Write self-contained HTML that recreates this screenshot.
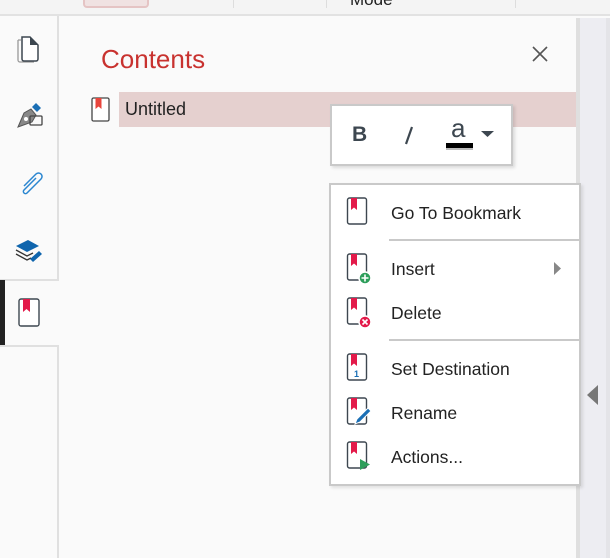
<!DOCTYPE html>
<html><head><meta charset="utf-8"><style>
*{margin:0;padding:0;box-sizing:border-box}
body{width:610px;height:558px;overflow:hidden;background:#fafafa;font-family:"Liberation Sans",sans-serif;position:relative}
.a{position:absolute}
.mi{position:absolute;left:391px;font-size:17.5px;color:#222;line-height:20px}
</style></head><body>
<div class="a" style="left:0;top:0;width:610px;height:16px;background:#f4f4f4;border-bottom:2px solid #e2e2e2"></div>
<div class="a" style="left:83px;top:-6px;width:66px;height:14px;border:2px solid #e5c4c4;border-radius:4px;background:#f0e2e2"></div>
<div class="a" style="left:233px;top:0;width:1px;height:8px;background:#ddd"></div>
<div class="a" style="left:326px;top:0;width:1px;height:8px;background:#ddd"></div>
<div class="a" style="left:515px;top:0;width:1px;height:8px;background:#ddd"></div>
<div class="a" style="left:350px;top:-10px;font-size:17px;color:#222">Mode</div>
<div class="a" style="left:57px;top:16px;width:2px;height:264px;background:#e0e0e0"></div>
<div class="a" style="left:0;top:279px;width:59px;height:2px;background:#e0e0e0"></div>
<div class="a" style="left:0;top:280px;width:5px;height:65px;background:#222"></div>
<div class="a" style="left:0;top:345px;width:59px;height:2px;background:#e0e0e0"></div>
<div class="a" style="left:57px;top:345px;width:2px;height:213px;background:#e0e0e0"></div>
<svg class="a" style="left:0;top:16px" width="58" height="330">
 <path d="M18 24 h3 M18 24 v20 a2 2 0 0 0 2 2 h14" stroke="#999" stroke-width="1.3" fill="none"/>
 <path d="M22 21 h8 l8 8 v14 a2 2 0 0 1 -2 2 h-12 a2 2 0 0 1 -2 -2 z" fill="#fff" stroke="#3d4750" stroke-width="1.5"/>
 <path d="M30 21 v8 h8 z" fill="#3d4750"/>
 <path d="M18 111 l6 -14 l7 -4 l5 6 l-4 7 z" fill="#888" stroke="#555" stroke-width="1"/>
 <circle cx="26" cy="103" r="2" fill="#fff"/>
 <path d="M32 91 l4 -4 l5 5 l-4 4 z" fill="#1a6fb5"/>
 <rect x="30" y="100" width="12" height="9" fill="none" stroke="#444" stroke-width="1.3" rx="1"/>
 <path d="M24 170 l12 -12 a3.5 3.5 0 0 1 5 5 l-14 14 a2 2 0 0 1 -3 -3 l12 -12" fill="none" stroke="#2a86d0" stroke-width="1.5"/>
 <path d="M16 230 l12 -6 l11 6 l-12 6 z" fill="#0f65ad"/>
 <path d="M16 234 l11 6 l6 -3 M16 238 l11 6 l4 -2" stroke="#333" stroke-width="1.3" fill="none"/>
 <path d="M30 243 l9 -8 l3 3 l-9 8 z" fill="#0f65ad"/>
 <rect x="19" y="283" width="20" height="27" rx="2" fill="#fff" stroke="#3d4750" stroke-width="1.4"/>
 <path d="M23 283 h7 v13 l-3.5 -3 l-3.5 3 z" fill="#e31a4a"/>
</svg>
<div class="a" style="left:101px;top:44px;font-size:26px;color:#c8322f;font-weight:300;line-height:30px">Contents</div>
<svg class="a" style="left:532px;top:46px" width="16" height="16"><path d="M1 1 L15 15 M15 1 L1 15" stroke="#555" stroke-width="1.6"/></svg>
<svg class="a" style="left:91px;top:97px" width="20" height="26"><rect x="1" y="1" width="17" height="23" rx="1.5" fill="#fff" stroke="#444" stroke-width="1.3"/><path d="M4.5 1 h6 v11 l-3 -2.5 l-3 2.5 z" fill="#e8453c"/></svg>
<div class="a" style="left:119px;top:92px;width:457px;height:35px;background:#e5d0cf"></div>
<div class="a" style="left:125px;top:99px;font-size:18px;color:#222">Untitled</div>
<div class="a" style="left:576px;top:18px;width:4px;height:540px;background:#dfdfdf"></div>
<div class="a" style="left:580px;top:18px;width:30px;height:540px;background:#ededf2"></div>
<div class="a" style="left:606px;top:18px;width:4px;height:540px;background:#e4e4e8"></div>
<svg class="a" style="left:586px;top:384px" width="14" height="22"><path d="M12 1 L1 11 L12 21 z" fill="#777"/></svg>
<div class="a" style="left:330px;top:104px;width:183px;height:62px;background:#fff;border:2px solid #c9c9c9;box-shadow:2px 2px 3px rgba(0,0,0,.12)"></div>
<div class="a" style="left:352px;top:123px;font-size:21px;font-weight:bold;color:#3d4750">B</div>
<svg class="a" style="left:403px;top:126px" width="12" height="20"><path d="M9 1 L3 18" stroke="#3d4750" stroke-width="2.2"/></svg>
<div class="a" style="left:451px;top:115px;font-size:26px;color:#3d4750;line-height:26px">a</div>
<div class="a" style="left:446px;top:143px;width:27px;height:7px;background:#000;border-bottom:2px solid #bbb"></div>
<svg class="a" style="left:481px;top:131px" width="14" height="7"><path d="M0 0 h13 l-6.5 6 z" fill="#3d4750"/></svg>
<div class="a" style="left:329px;top:183px;width:252px;height:303px;background:#fff;border:2px solid #c9c9c9;box-shadow:2px 2px 3px rgba(0,0,0,.1)"></div>
<div class="a" style="left:389px;top:239px;width:191px;height:2px;background:#c9c9c9"></div>
<div class="a" style="left:389px;top:339px;width:191px;height:2px;background:#c9c9c9"></div>
<svg class="a" style="left:345px;top:196px" width="30" height="284">
 <g><rect x="2.5" y="2" width="19" height="26" rx="2" fill="#fff" stroke="#3d4750" stroke-width="1.4"/><path d="M6 2 h6 v12 l-3 -2.5 l-3 2.5 z" fill="#e31a4a"/></g>
 <g transform="translate(0,56)"><rect x="2.5" y="2" width="19" height="26" rx="2" fill="#fff" stroke="#3d4750" stroke-width="1.4"/><path d="M6 2 h6 v12 l-3 -2.5 l-3 2.5 z" fill="#e31a4a"/><circle cx="20" cy="26" r="6" fill="#2e9e5b" stroke="#fff" stroke-width="1.5"/><path d="M16.5 26 h7 M20 22.5 v7" stroke="#fff" stroke-width="1.6"/></g>
 <g transform="translate(0,100)"><rect x="2.5" y="2" width="19" height="26" rx="2" fill="#fff" stroke="#3d4750" stroke-width="1.4"/><path d="M6 2 h6 v12 l-3 -2.5 l-3 2.5 z" fill="#e31a4a"/><circle cx="20" cy="26" r="6" fill="#e31a4a" stroke="#fff" stroke-width="1.5"/><path d="M17.5 23.5 l5 5 M22.5 23.5 l-5 5" stroke="#fff" stroke-width="1.6"/></g>
 <g transform="translate(0,156)"><rect x="2.5" y="2" width="19" height="26" rx="2" fill="#fff" stroke="#3d4750" stroke-width="1.4"/><path d="M6 2 h6 v12 l-3 -2.5 l-3 2.5 z" fill="#e31a4a"/><text x="9" y="25" font-size="9" font-weight="bold" fill="#1a6fb5" font-family="Liberation Sans">1</text></g>
 <g transform="translate(0,200)"><rect x="2.5" y="2" width="19" height="26" rx="2" fill="#fff" stroke="#3d4750" stroke-width="1.4"/><path d="M6 2 h6 v12 l-3 -2.5 l-3 2.5 z" fill="#e31a4a"/><path d="M10 28 l2 -5 l11 -11 l3 3 l-11 11 z" fill="#1a6fb5" stroke="#fff" stroke-width="1"/></g>
 <g transform="translate(0,244)"><rect x="2.5" y="2" width="19" height="26" rx="2" fill="#fff" stroke="#3d4750" stroke-width="1.4"/><path d="M6 2 h6 v12 l-3 -2.5 l-3 2.5 z" fill="#e31a4a"/><path d="M15 19 L25 24.5 L15 30 z" fill="#2e9e5b"/></g>
</svg>
<div class="mi" style="top:203px">Go To Bookmark</div>
<div class="mi" style="top:259px">Insert</div>
<div class="mi" style="top:303px">Delete</div>
<div class="mi" style="top:359px">Set Destination</div>
<div class="mi" style="top:403px">Rename</div>
<div class="mi" style="top:447px">Actions...</div>
<svg class="a" style="left:553px;top:261px" width="9" height="15"><path d="M1 1 L8 7.5 L1 14 z" fill="#888"/></svg>
</body></html>
